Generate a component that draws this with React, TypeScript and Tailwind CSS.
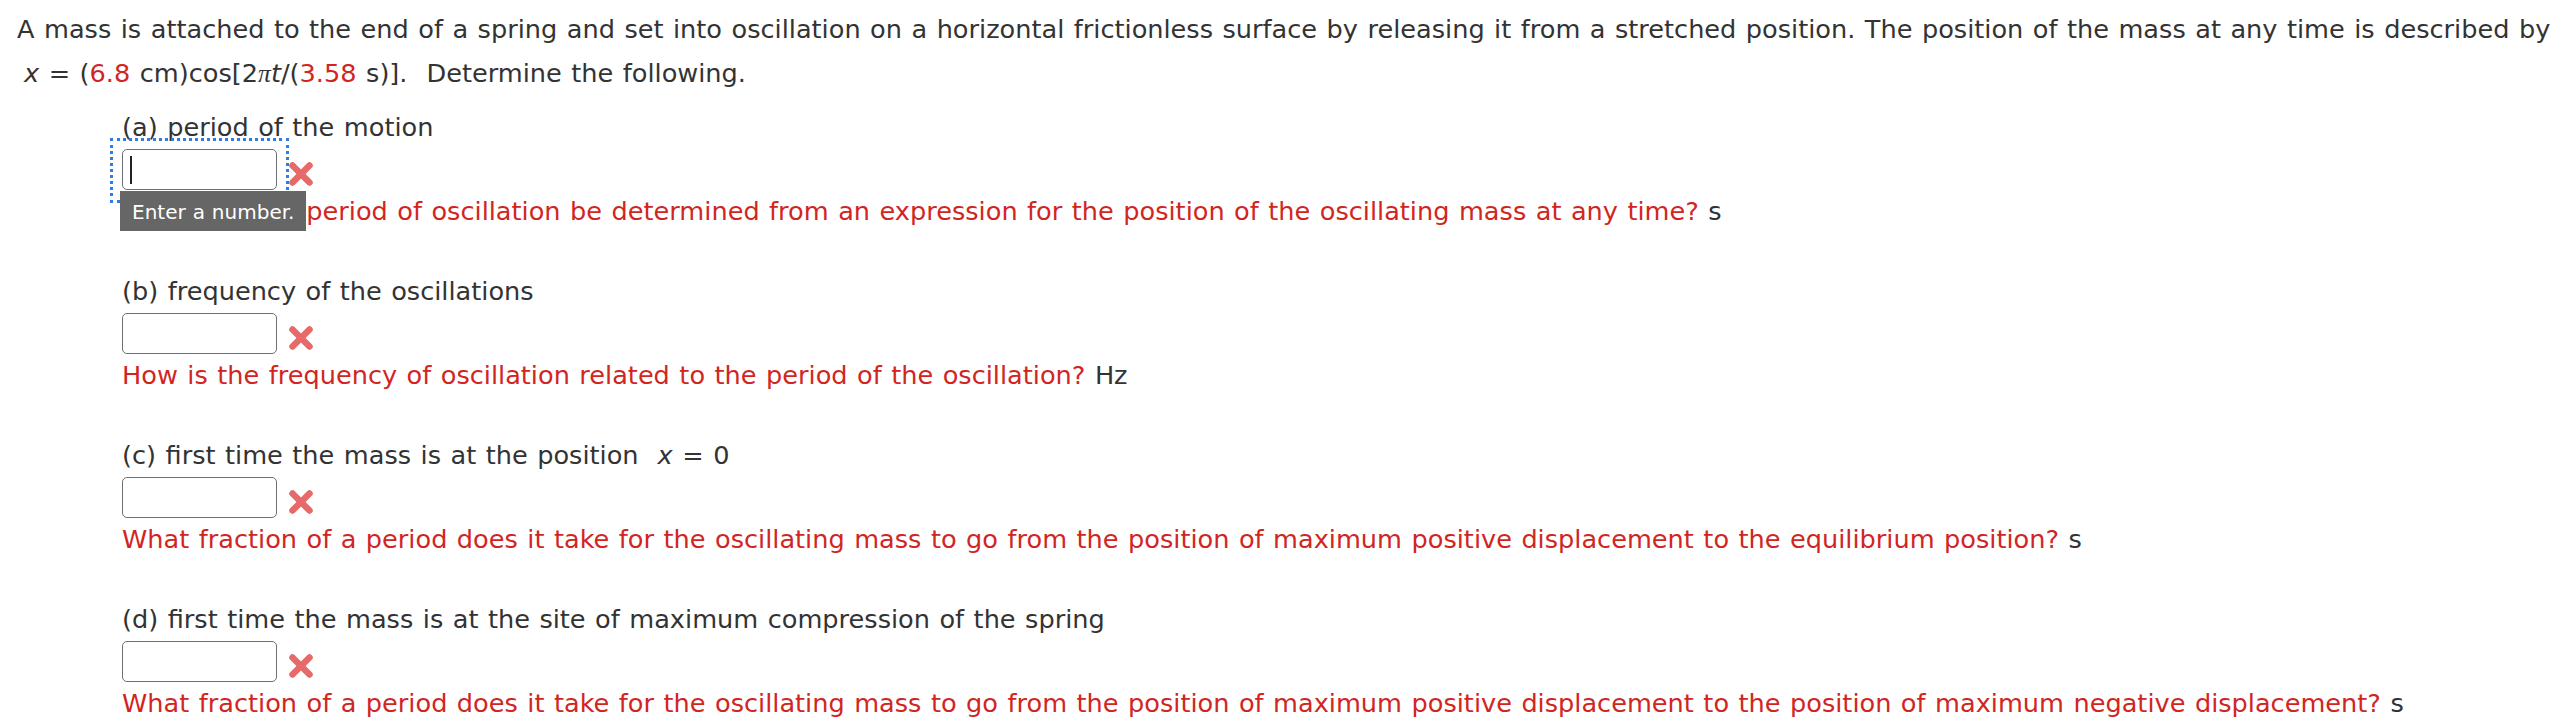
import React from "react";

const RED = "text-[#d1261f]";

function XIcon() {
  return (
    <svg width="26" height="26" viewBox="0 0 26 26" className="self-start ml-[11px] mt-[12px]">
      <g stroke="#e45a5a" strokeWidth="6.5" strokeLinecap="round" opacity="0.9">
        <line x1="4.5" y1="4.5" x2="21.5" y2="21.5" />
        <line x1="21.5" y1="4.5" x2="4.5" y2="21.5" />
      </g>
    </svg>
  );
}

function Section({
  label,
  hint,
  unit,
  focused,
}: {
  label: React.ReactNode;
  hint: React.ReactNode;
  unit: string;
  focused?: boolean;
}) {
  return (
    <div className="mb-[48px]">
      <div className="h-[32px] leading-[32px] whitespace-nowrap">{label}</div>
      <div className="relative mt-[6px] flex h-[41px]">
        <div className="relative w-[155px] h-[41px] border-[1.6px] border-[#707070] rounded-[5px] bg-white">
          {focused && <div className="absolute left-[7px] top-[6px] w-[2px] h-[28px] bg-[#222]" />}
        </div>
        <XIcon />
        {focused && (
          <>
            <div className="absolute left-[-12px] top-[-11px] w-[179px] h-[65px] border-[3px] border-dotted border-[#2f7de1]" />
            <div className="absolute z-10 left-[-2px] top-[42px] w-[186px] h-[40px] bg-[#666] text-white text-[20px] leading-[40px] pl-[12px] pt-[1px] whitespace-nowrap [word-spacing:0.6px]">
              Enter a number.
            </div>
          </>
        )}
      </div>
      <div className="mt-[5px] h-[32px] leading-[32px] whitespace-nowrap">
        <span className={RED}>{hint}</span> {unit}
      </div>
    </div>
  );
}

export default function App() {
  return (
    <div className="w-[2572px] h-[728px] overflow-hidden bg-white text-[#333] text-[25.6px] font-['DejaVu_Sans',Verdana,sans-serif] [word-spacing:1.35px]">
      <div className="pl-[17px] pt-[7px] leading-[44px]">
        <div className="whitespace-nowrap">
          A mass is attached to the end of a spring and set into oscillation on a horizontal frictionless surface by
          releasing it from a stretched position. The position of the mass at any time is described by
        </div>
        <div className="whitespace-nowrap pl-[7px]">
          <i>x</i> = (<span className={RED}>6.8</span> cm)cos[2
          <i className="font-['Liberation_Serif',serif]">π</i>
          <i>t</i>/(<span className={RED}>3.58</span> s)].&nbsp; Determine the following.
        </div>
      </div>
      <div className="pl-[122px] mt-[15px]">
        <Section
          focused
          label="(a) period of the motion"
          hint={
            <>
              <span className="mr-[12px]">How can the</span> period of oscillation be determined from an expression for
              the position of the oscillating mass at any time?
            </>
          }
          unit="s"
        />
        <Section
          label="(b) frequency of the oscillations"
          hint="How is the frequency of oscillation related to the period of the oscillation?"
          unit="Hz"
        />
        <Section
          label={
            <>
              (c) first time the mass is at the position&nbsp; <i>x</i> = 0
            </>
          }
          hint="What fraction of a period does it take for the oscillating mass to go from the position of maximum positive displacement to the equilibrium position?"
          unit="s"
        />
        <Section
          label="(d) first time the mass is at the site of maximum compression of the spring"
          hint="What fraction of a period does it take for the oscillating mass to go from the position of maximum positive displacement to the position of maximum negative displacement?"
          unit="s"
        />
      </div>
    </div>
  );
}
